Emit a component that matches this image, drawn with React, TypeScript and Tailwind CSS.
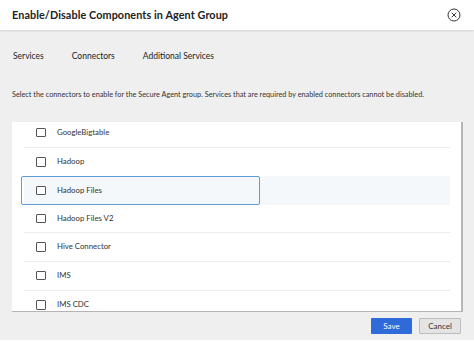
import { useState } from 'react';

const CONNECTORS = ['GoogleBigtable', 'Hadoop', 'Hadoop Files', 'Hadoop Files V2', 'Hive Connector', 'IMS', 'IMS CDC'];

const TABS = ['Services', 'Connectors', 'Additional Services'];

function CloseIcon() {
  return (
    <svg width="14" height="14" viewBox="0 0 14 14" fill="none" stroke="#333" strokeWidth="1">
      <circle cx="7" cy="7" r="6" />
      <path d="M5 5l4 4M9 5l-4 4" strokeLinecap="round" />
    </svg>
  );
}

export default function App() {
  const [checked, setChecked] = useState<Record<string, boolean>>({});

  return (
    <div className="w-[474px] h-[342px] bg-white overflow-hidden font-['Lato','Noto_Sans',sans-serif] text-[#333]">
      <div className="flex flex-col h-[340px] bg-[#efefef]">
        {/* Header */}
        <div className="h-[30px] bg-white flex items-center justify-between pl-3 pr-[13px] shadow-[0_1px_2px_rgba(0,0,0,0.12)] relative">
          <h2 className="text-[10.8px] font-bold text-[#222] tracking-[0.1px]">Enable/Disable Components in Agent Group</h2>
          <CloseIcon />
        </div>

        {/* Tabs */}
        <div className="flex items-center h-[22px] mt-[15px] pl-[13px] gap-[28px] text-[8.5px] text-[#222]">
          {TABS.map(t => (
            <span key={t}>{t}</span>
          ))}
        </div>

        {/* Description */}
        <p className="mt-[23px] pl-3 text-[7.3px] text-[#333]">
          Select the connectors to enable for the Secure Agent group. Services that are required by enabled connectors cannot be disabled.
        </p>

        {/* Connector list */}
        <div className="mt-[21px] ml-3 w-[451px] h-[190px] bg-white overflow-hidden border-r-2 border-b border-[#b5b5b5] pl-[12px] pr-[11px]">
          <div className="-mt-[3px]">
            {CONNECTORS.map((name, i) => {
              const active = name === 'Hadoop Files';
              return (
                <div
                  key={name}
                  className={`h-[28.6px] flex items-center relative ${i < CONNECTORS.length - 1 && !active && CONNECTORS[i + 1] !== 'Hadoop Files' ? 'border-b border-[#ececec]' : ''} ${active ? 'bg-[#f4f8fb]' : ''}`}
                >
                  {active && (
                    <div className="absolute left-[-3px] top-0 w-[239px] h-[29px] border border-[#5d9bd3] rounded-[2px]" />
                  )}
                  <button
                    onClick={() => setChecked(c => ({ ...c, [name]: !c[name] }))}
                    className={`ml-[12px] w-[9.5px] h-[9.5px] border-[1.5px] border-[#555] rounded-[1px] ${checked[name] ? 'bg-[#2f6ad9]' : 'bg-white'}`}
                  />
                  <span className="ml-[11.5px] text-[7.8px] text-[#333]">{name}</span>
                </div>
              );
            })}
          </div>
        </div>

        {/* Footer */}
        <div className="flex justify-end gap-[7px] mt-[6px] pr-[13px]">
          <button className="w-[41px] h-[16px] bg-[#2f6ad9] text-white text-[8px] rounded-[1px]">Save</button>
          <button className="w-[42px] h-[16px] bg-[#e4e4e4] border border-[#bdbdbd] text-[#333] text-[8px] rounded-[1px]">Cancel</button>
        </div>
      </div>
    </div>
  );
}
